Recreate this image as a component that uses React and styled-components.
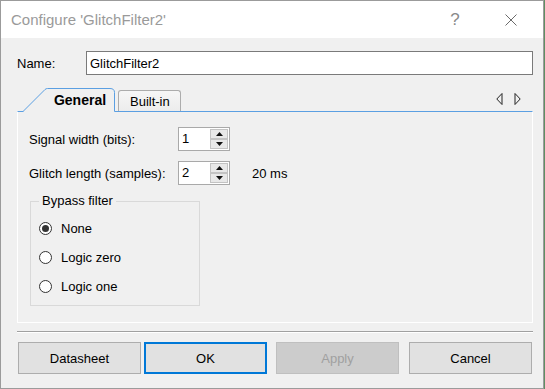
import React from 'react';
import styled, { createGlobalStyle } from 'styled-components';

const GlobalStyle = createGlobalStyle`
	html, body {
		margin: 0;
		padding: 0;
	}

	body {
		background: #5f8f62;
		font-family: "Liberation Sans", Arial, sans-serif;
		font-size: 13px;
		color: #000;
	}
`;

const Window = styled.div`
	width: 544px;
	height: 389px;
	box-sizing: border-box;
	border: 1px solid #9b9b9b;
	background: #f0f0f0;
	display: flex;
	flex-direction: column;
`;

const TitleBar = styled.div`
	height: 37px;
	flex-shrink: 0;
	background: #fff;
	display: flex;
	align-items: center;
`;

const Title = styled.div`
	flex: 1;
	padding-left: 10px;
	font-size: 15px;
	color: #9a9a9a;
`;

const CaptionButton = styled.div`
	width: ${p => p.$w}px;
	height: 100%;
	display: flex;
	align-items: center;
	justify-content: center;
	color: #8a8a8a;
	font-size: 17px;
`;

const Body = styled.div`
	flex: 1;
	display: flex;
	flex-direction: column;
	padding: 13px 10px 0 16px;
`;

const NameRow = styled.div`
	height: 24px;
	display: flex;
	align-items: center;
`;

const NameLabel = styled.label`
	width: 69px;
	flex-shrink: 0;
`;

const TextBox = styled.input`
	flex: 1;
	height: 24px;
	box-sizing: border-box;
	border: 1px solid #7a7a7a;
	background: #fff;
	padding: 0 3px;
	font-family: inherit;
	font-size: 13px;
	color: #000;
	outline: none;
`;

const TabStrip = styled.div`
	margin-top: 13px;
	height: 23px;
	display: flex;
	align-items: flex-end;
`;

const ActiveTab = styled.div`
	position: relative;
	z-index: 1;
	width: 92px;
	height: 24px;
	margin: 0 0 -1px 6px;
	display: flex;
	align-items: center;
	justify-content: center;
	padding-left: 22px;
	box-sizing: border-box;
	font-weight: bold;
	font-size: 14px;

	svg {
		position: absolute;
		left: 0;
		top: 0;
	}

	span {
		position: relative;
	}
`;

const Tab = styled.div`
	width: 63px;
	height: 21px;
	margin-left: 3px;
	box-sizing: border-box;
	border: 1px solid #acacac;
	border-bottom: none;
	border-radius: 3px 3px 0 0;
	background: linear-gradient(#f6f6f6, #ececec);
	padding-left: 11px;
	display: flex;
	align-items: center;
`;

const ScrollArrows = styled.div`
	margin-left: auto;
	align-self: center;
	display: flex;
	gap: 11px;
	padding: 0 12px 1px 0;
`;

const Panel = styled.div`
	height: 212px;
	box-sizing: border-box;
	border-top: 1px solid #5b9fe2;
	border-left: 1px solid #fff;
	border-right: 1px solid #fff;
	border-bottom: 1px solid #fff;
	padding: 15px 0 0 11px;
	display: flex;
	flex-direction: column;
`;

const FieldRow = styled.div`
	height: 24px;
	display: flex;
	align-items: center;
	margin-top: ${p => p.$top || 0}px;
`;

const FieldLabel = styled.span`
	width: 149px;
	flex-shrink: 0;
`;

const Spinner = styled.div`
	width: 52px;
	height: 24px;
	box-sizing: border-box;
	border: 1px solid #a9a9a9;
	background: #fff;
	display: flex;
`;

const SpinValue = styled.span`
	flex: 1;
	padding-left: 3px;
	line-height: 22px;
`;

const SpinColumn = styled.div`
	width: 18px;
	margin: 1px 1px 1px 0;
	display: flex;
	flex-direction: column;
`;

const SpinButton = styled.div`
	flex: 1;
	border: 1px solid #c3c3c3;
	background: #e8e8e8;
	display: flex;
	align-items: center;
	justify-content: center;
`;

const Unit = styled.span`
	margin-left: 22px;
`;

const GroupBox = styled.fieldset`
	width: 170px;
	box-sizing: border-box;
	margin: 8px 0 0 1px;
	padding: 5px 0 4px 8px;
	border: 1px solid #d9d9d9;

	legend {
		padding: 0 3px;
		line-height: 16px;
	}
`;

const RadioRow = styled.div`
	height: 29px;
	display: flex;
	align-items: center;
`;

const RadioMark = styled.span`
	width: 13px;
	height: 13px;
	box-sizing: border-box;
	border-radius: 50%;
	border: 1px solid #333;
	background: #fff;
	display: flex;
	align-items: center;
	justify-content: center;
	flex-shrink: 0;

	&::after {
		content: '';
		width: 7px;
		height: 7px;
		border-radius: 50%;
		background: ${p => (p.$checked ? '#333' : 'transparent')};
	}
`;

const RadioText = styled.span`
	margin-left: 9px;
`;

const Separator = styled.div`
	margin-top: 8px;
	border-top: 1px solid #a0a0a0;
	border-bottom: 1px solid #fff;
`;

const Footer = styled.div`
	margin: 9px 0 0 1px;
	display: flex;
`;

const Button = styled.div`
	width: 123px;
	height: 32px;
	box-sizing: border-box;
	margin-left: ${p => p.$gap || 0}px;
	border: ${p => (p.$default ? '2px solid #0078d7' : '1px solid #adadad')};
	background: ${p => (p.$disabled ? '#cccccc' : '#e1e1e1')};
	border-color: ${p => (p.$disabled ? '#bfbfbf' : undefined)};
	color: ${p => (p.$disabled ? '#a0a0a0' : '#000')};
	display: flex;
	align-items: center;
	justify-content: center;
`;

const UpArrow = () => (
	<svg width='7' height='4' viewBox='0 0 7 4'>
		<path d='M3.5 0 L7 4 H0 Z' fill='#111' />
	</svg>
);

const DownArrow = () => (
	<svg width='7' height='4' viewBox='0 0 7 4'>
		<path d='M0 0 H7 L3.5 4 Z' fill='#111' />
	</svg>
);

const NumberBox = ({ value }) => (
	<Spinner>
		<SpinValue>{value}</SpinValue>
		<SpinColumn>
			<SpinButton><UpArrow /></SpinButton>
			<SpinButton><DownArrow /></SpinButton>
		</SpinColumn>
	</Spinner>
);

const bypassOptions = [ 'None', 'Logic zero', 'Logic one' ];

const App = () => (
	<>
		<GlobalStyle />
		<Window>
			<TitleBar>
				<Title>Configure 'GlitchFilter2'</Title>
				<CaptionButton $w={46}>?</CaptionButton>
				<CaptionButton $w={65}>
					<svg width='12' height='12' viewBox='0 0 12 12'>
						<path d='M0.5 0.5 L11.5 11.5 M11.5 0.5 L0.5 11.5' stroke='#6a6a6a' strokeWidth='1' />
					</svg>
				</CaptionButton>
			</TitleBar>

			<Body>
				<NameRow>
					<NameLabel>Name:</NameLabel>
					<TextBox value='GlitchFilter2' readOnly />
				</NameRow>

				<TabStrip>
					<ActiveTab>
						<svg width='92' height='24' viewBox='0 0 92 24'>
							<path d='M0 24 L22 1.5 Q23 0.5 24.5 0.5 H87 Q91.5 0.5 91.5 4.5 V24 Z' fill='#f0f0f0' />
							<path d='M0 23.5 L22 1.5 Q23 0.5 24.5 0.5 H87 Q91.5 0.5 91.5 4.5 V23.5' fill='none' stroke='#5b9fe2' />
						</svg>
						<span>General</span>
					</ActiveTab>
					<Tab>Built-in</Tab>
					<ScrollArrows>
						<svg width='7' height='12' viewBox='0 0 7 12'>
							<path d='M6 0.5 V11.5 L0.8 6 Z' fill='none' stroke='#222' />
						</svg>
						<svg width='7' height='12' viewBox='0 0 7 12'>
							<path d='M1 0.5 V11.5 L6.2 6 Z' fill='none' stroke='#222' />
						</svg>
					</ScrollArrows>
				</TabStrip>

				<Panel>
					<FieldRow>
						<FieldLabel>Signal width (bits):</FieldLabel>
						<NumberBox value='1' />
					</FieldRow>
					<FieldRow $top={10}>
						<FieldLabel>Glitch length (samples):</FieldLabel>
						<NumberBox value='2' />
						<Unit>20 ms</Unit>
					</FieldRow>

					<GroupBox>
						<legend>Bypass filter</legend>
						{bypassOptions.map((option, i) => (
							<RadioRow key={option}>
								<RadioMark $checked={i === 0} />
								<RadioText>{option}</RadioText>
							</RadioRow>
						))}
					</GroupBox>
				</Panel>

				<Separator />

				<Footer>
					<Button>Datasheet</Button>
					<Button $gap={3} $default>OK</Button>
					<Button $gap={9} $disabled>Apply</Button>
					<Button $gap={10}>Cancel</Button>
				</Footer>
			</Body>
		</Window>
	</>
);

export default App;
